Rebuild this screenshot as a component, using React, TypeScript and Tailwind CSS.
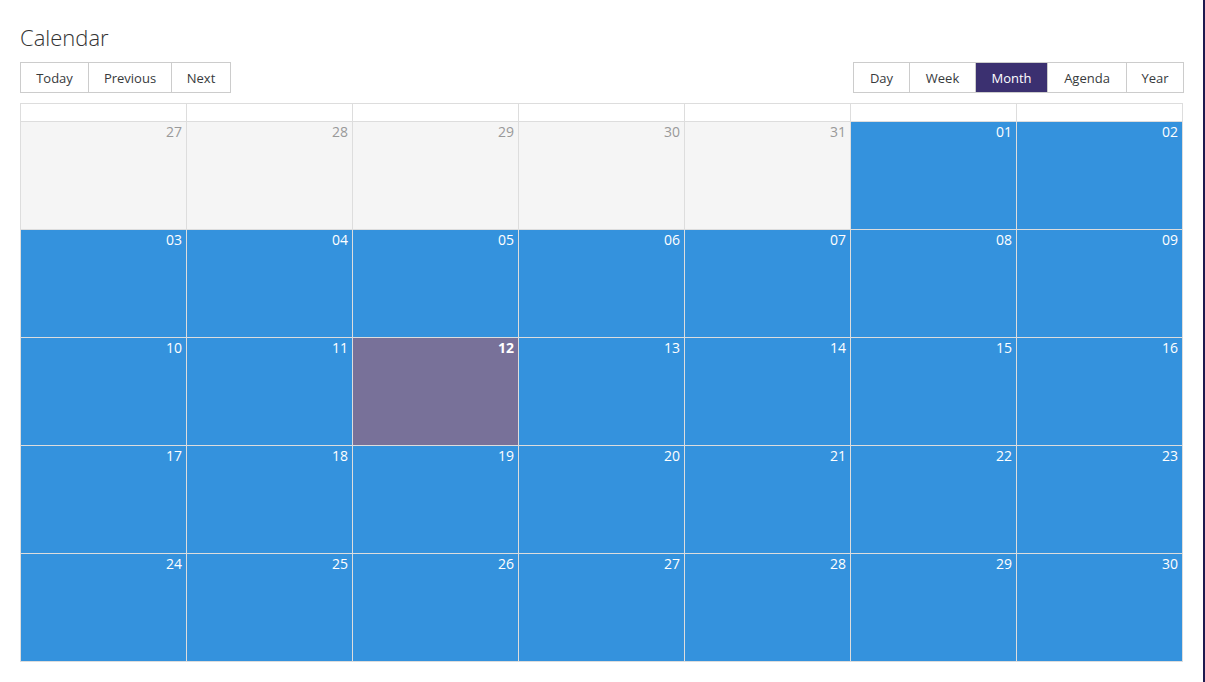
import React from 'react';

type Day = { label: string; kind: 'off' | 'on' | 'today' };

const leftButtons = [
  { label: 'Today', w: 'w-[67px]' },
  { label: 'Previous', w: 'w-[83px]' },
  { label: 'Next', w: 'w-[59px]' },
];

const viewButtons = [
  { label: 'Day', w: 'w-[55px]' },
  { label: 'Week', w: 'w-[66px]' },
  { label: 'Month', w: 'w-[72px]' },
  { label: 'Agenda', w: 'w-[79px]' },
  { label: 'Year', w: 'w-[57px]' },
];

function buildWeeks(): Day[][] {
  const days: Day[] = [];
  for (const d of [27, 28, 29, 30, 31]) days.push({ label: String(d), kind: 'off' });
  for (let d = 1; d <= 30; d++) {
    days.push({ label: String(d).padStart(2, '0'), kind: d === 12 ? 'today' : 'on' });
  }
  const weeks: Day[][] = [];
  for (let i = 0; i < days.length; i += 7) weeks.push(days.slice(i, i + 7));
  return weeks;
}

function ButtonGroup({ items, active }: { items: { label: string; w: string }[]; active?: string }) {
  return (
    <div className="flex border border-[#ccc]">
      {items.map((b, i) => (
        <button
          key={b.label}
          className={`${b.w} h-[29px] pt-[2px] text-[13px] ${i > 0 ? 'border-l border-[#ccc]' : ''} ${
            active === b.label ? 'bg-[#3b3070] text-white' : 'bg-white text-[#373a3c]'
          }`}
        >
          {b.label}
        </button>
      ))}
    </div>
  );
}

export default function App() {
  const weeks = buildWeeks();

  return (
    <div
      className="w-[1205px] h-[682px] bg-white border-r-2 border-[#1f1a4f] overflow-hidden"
      style={{ fontFamily: '"Open Sans", "Noto Sans", sans-serif' }}
    >
      <div className="pl-5 pr-[19px] pt-[22px]">
        <h1 className="text-[22px] font-light text-[#333] leading-[30px] mb-[10px]">Calendar</h1>

        <div className="flex justify-between items-center">
          <ButtonGroup items={leftButtons} />
          <ButtonGroup items={viewButtons} active="Month" />
        </div>

        <div className="mt-[10px] border border-[#ddd] w-[1163px]">
          <div className="flex h-[17px]">
            {Array.from({ length: 7 }).map((_, i) => (
              <div key={i} className={`flex-1 ${i > 0 ? 'border-l border-[#ddd]' : ''}`} />
            ))}
          </div>
          {weeks.map((week, wi) => (
            <div key={wi} className="flex h-[108px] border-t border-[#ddd]">
              {week.map((day, di) => (
                <div
                  key={di}
                  className={`flex-1 text-right pr-[4px] leading-[20px] text-[14px] ${di > 0 ? 'border-l border-[#ddd]' : ''} ${
                    day.kind === 'off'
                      ? 'bg-[#f5f5f5] text-[#999]'
                      : day.kind === 'today'
                      ? 'bg-[#787199] text-white font-bold'
                      : 'bg-[#3492dd] text-white'
                  }`}
                >
                  {day.label}
                </div>
              ))}
            </div>
          ))}
        </div>
      </div>
    </div>
  );
}
